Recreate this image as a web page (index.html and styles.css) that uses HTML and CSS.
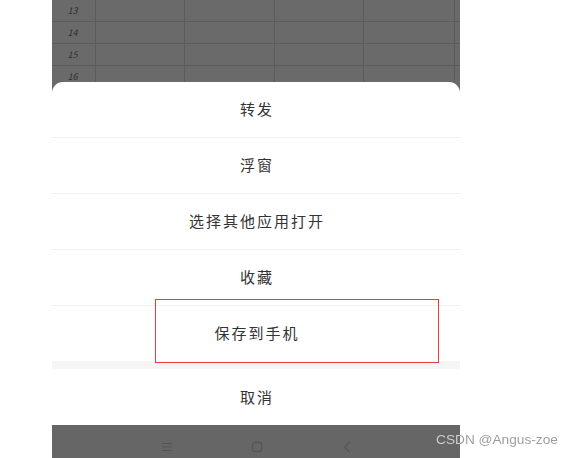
FILE: index.html
```html
<!DOCTYPE html>
<html lang="zh">
<head>
<meta charset="utf-8">
<link rel="stylesheet" href="styles.css">
</head>
<body>
<div class="phone">
  <div class="sheet-bg">
    <div class="grid">
      <div class="cell num">13</div><div class="cell"></div><div class="cell"></div><div class="cell"></div><div class="cell"></div><div class="cell last"></div>
      <div class="cell num">14</div><div class="cell"></div><div class="cell"></div><div class="cell"></div><div class="cell"></div><div class="cell last"></div>
      <div class="cell num">15</div><div class="cell"></div><div class="cell"></div><div class="cell"></div><div class="cell"></div><div class="cell last"></div>
      <div class="cell num">16</div><div class="cell"></div><div class="cell"></div><div class="cell"></div><div class="cell"></div><div class="cell last"></div>
    </div>
  </div>
  <div class="sheet">
    <div class="item">转发</div>
    <div class="item">浮窗</div>
    <div class="item">选择其他应用打开</div>
    <div class="item">收藏</div>
    <div class="item noline">保存到手机</div>
    <div class="gap"></div>
    <div class="item cancel">取消</div>
  </div>
  <div class="navbar">
    <svg class="nav-icon" width="12" height="10" viewBox="0 0 12 10"><path d="M1 1.5H11M1 5H11M1 8.5H11" stroke="#555" stroke-width="1.2" fill="none"/></svg>
    <svg class="nav-icon" width="12" height="12" viewBox="0 0 12 12"><rect x="1.5" y="1.5" width="9" height="9" rx="2" stroke="#555" stroke-width="1.3" fill="none"/></svg>
    <svg class="nav-icon" width="8" height="12" viewBox="0 0 8 12"><path d="M6.5 1L1.5 6L6.5 11" stroke="#555" stroke-width="1.2" fill="none"/></svg>
  </div>
  <div class="highlight"></div>
</div>
<div class="watermark">CSDN @Angus-zoe</div>
</body>
</html>
```

FILE: styles.css
```css
html, body {
  margin: 0;
  padding: 0;
  background: #ffffff;
}
body {
  width: 574px;
  height: 458px;
  position: relative;
  overflow: hidden;
  font-family: "Noto Sans CJK SC", "Noto Sans", sans-serif;
}
.phone {
  position: relative;
  margin-left: 52px;
  width: 408px;
  height: 458px;
  background: #6a6a6a;
  display: flex;
  flex-direction: column;
  overflow: hidden;
}
.sheet-bg {
  height: 82px;
  overflow: hidden;
  flex: none;
}
.grid {
  display: grid;
  grid-template-columns: 44px 89px 90px 89px 91px 1fr;
  grid-auto-rows: 22px;
}
.cell {
  box-sizing: border-box;
  border-right: 1px solid #5c5c5c;
  border-bottom: 1px solid #5c5c5c;
  background: #6a6a6a;
}
.cell.last {
  border-right: none;
}
.num {
  display: flex;
  align-items: center;
  justify-content: center;
  font-size: 9px;
  color: #2e2e2e;
  font-style: italic;
  padding-right: 2px;
}
.sheet {
  flex: none;
  background: #ffffff;
  border-radius: 11px 11px 0 0;
  display: flex;
  flex-direction: column;
}
.item {
  height: 56px;
  box-sizing: border-box;
  border-bottom: 1px solid #f0f0f0;
  display: flex;
  align-items: center;
  justify-content: center;
  font-size: 15px;
  letter-spacing: 2px;
  padding-left: 2px;
  padding-bottom: 2px;
  color: #333333;
}
.item.noline {
  border-bottom: none;
  height: 55px;
}
.item.cancel {
  border-bottom: none;
  height: 56px;
}
.gap {
  height: 8px;
  background: #f5f5f5;
}
.navbar {
  flex: 1;
  background: #666666;
  display: flex;
  align-items: flex-end;
  padding-bottom: 5px;
  box-sizing: border-box;
}
.nav-icon {
  display: block;
}
.nav-icon:nth-child(1) {
  margin-left: 109px;
  margin-bottom: 1px;
}
.nav-icon:nth-child(2) {
  margin-left: 78px;
}
.nav-icon:nth-child(3) {
  margin-left: 80px;
}
.highlight {
  position: absolute;
  left: 103px;
  top: 299px;
  width: 284px;
  height: 64px;
  box-sizing: border-box;
  border: 1px solid #ee3b3b;
}
.watermark {
  position: absolute;
  left: 436px;
  top: 431px;
  font-family: "Liberation Sans", Arial, sans-serif;
  font-size: 13.7px;
  line-height: 18px;
  white-space: nowrap;
  background: linear-gradient(to right, #d2d2d2 24px, #9a9a9a 24px);
  -webkit-background-clip: text;
  background-clip: text;
  color: transparent;
}
```
